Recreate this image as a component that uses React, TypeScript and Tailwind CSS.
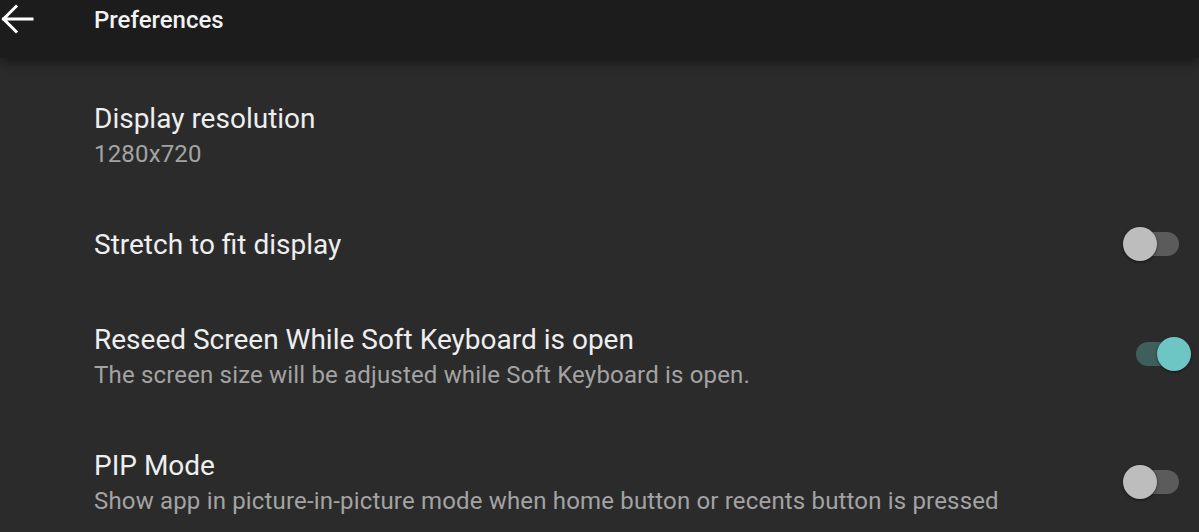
import React from "react";

function Toggle({ on }: { on: boolean }) {
  return (
    <div className="relative w-[68px] h-[34px] shrink-0">
      <div
        className={
          "absolute left-[13px] top-[5px] w-[43px] h-[24px] rounded-full " +
          (on ? "bg-[#3f5f5d]" : "bg-[#5b5b5b]")
        }
      />
      <div
        className={
          "absolute top-0 w-[34px] h-[34px] rounded-full shadow-[0_1px_3px_rgba(0,0,0,0.5)] " +
          (on ? "left-[34px] bg-[#6ec6c4]" : "left-0 bg-[#bdbdbd]")
        }
      />
    </div>
  );
}

export default function App() {
  return (
    <div
      className="w-[1199px] h-[532px] overflow-hidden bg-[#2b2b2b] flex flex-col"
      style={{ fontFamily: "Roboto, 'Liberation Sans', sans-serif" }}
    >
      <div className="relative z-10 h-[58px] shrink-0 bg-[#1c1c1c] flex items-center shadow-[0_4px_10px_rgba(0,0,0,0.45)]">
        <div className="w-[94px] h-[40px] -mt-[18px] flex items-center">
          <svg width="34" height="32" viewBox="0 0 34 32" fill="none">
            <path
              d="M32 15H3.5M16 2.5L3.5 15L16 27.5"
              stroke="#ffffff"
              strokeWidth="3"
              strokeLinecap="square"
            />
          </svg>
        </div>
        <div className="-mt-[18px] text-[24px] font-medium text-[#f2f2f2]">
          Preferences
        </div>
      </div>

      <div className="flex flex-col pt-[17px] pl-[94px] pr-[8px]">
        <div className="flex items-center py-[28px]">
          <div className="flex-1">
            <div className="text-[28px] leading-[32px] text-[#eeeeee]">Display resolution</div>
            <div className="text-[24px] leading-[38px] tracking-[0.17px] text-[#a3a3a3]">1280x720</div>
          </div>
        </div>

        <div className="flex items-center pt-[28px] pb-[35px]">
          <div className="flex-1 text-[28px] leading-[32px] text-[#eeeeee]">Stretch to fit display</div>
          <div className="-mt-[2px]">
            <Toggle on={false} />
          </div>
        </div>

        <div className="flex items-center py-[28px]">
          <div className="flex-1">
            <div className="text-[28px] leading-[32px] text-[#eeeeee]">
              Reseed Screen While Soft Keyboard is open
            </div>
            <div className="text-[24px] leading-[38px] tracking-[0.17px] text-[#a3a3a3]">
              The screen size will be adjusted while Soft Keyboard is open.
            </div>
          </div>
          <div className="-mt-[10px]">
            <Toggle on={true} />
          </div>
        </div>

        <div className="flex items-center py-[28px]">
          <div className="flex-1">
            <div className="text-[28px] leading-[32px] text-[#eeeeee]">PIP Mode</div>
            <div className="text-[24px] leading-[38px] tracking-[0.17px] text-[#a3a3a3] whitespace-nowrap">
              Show app in picture-in-picture mode when home button or recents button is pressed
            </div>
          </div>
          <div className="-mt-[6px]">
            <Toggle on={false} />
          </div>
        </div>
      </div>
    </div>
  );
}
